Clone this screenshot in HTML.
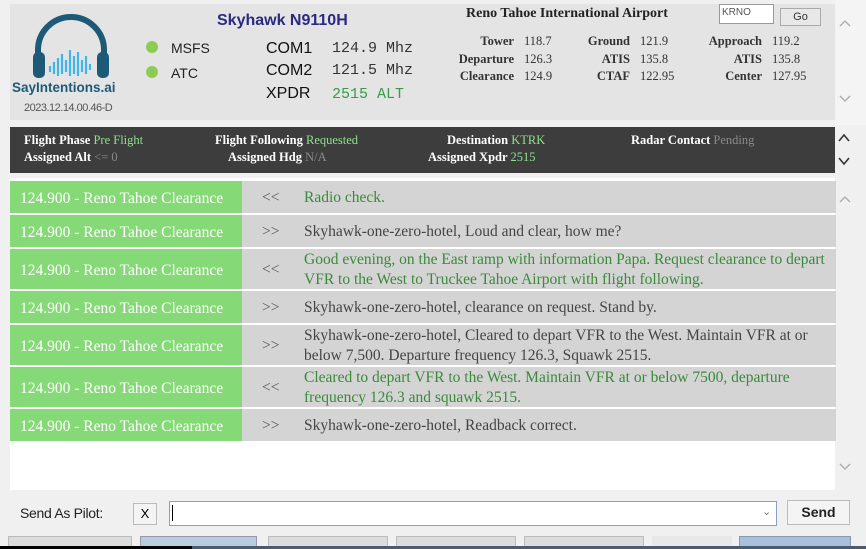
<!DOCTYPE html>
<html><head><meta charset="utf-8"><style>
*{margin:0;padding:0;box-sizing:border-box}
body{width:866px;height:549px;overflow:hidden;background:#f0f0f0;font-family:"Liberation Serif",serif;position:relative}
.abs{position:absolute}
.sans{font-family:"Liberation Sans",sans-serif}
.mono{font-family:"Liberation Mono",monospace}
.hdr{left:10px;top:4px;width:825px;height:116px;background:#e4e4e4}
.dark{left:10px;top:127px;width:825px;height:46px;background:#3d3d3d;color:#fff;font-size:12.5px;font-weight:bold}
.dark span{position:absolute;white-space:nowrap}
.g{color:#8fe08f;font-weight:normal}
.gr{color:#8a8a8a;font-weight:normal}
.chat{left:10px;top:178px;width:825px;height:312px;background:#fff}
.row{position:absolute;left:10px;width:826px;background:#d4d4d4;font-size:15.5px}
.row .f{position:absolute;left:0;top:0;bottom:0;width:232px;background:#86d977;color:#fff;display:flex;align-items:center;padding-left:10px;padding-top:3px}
.row .a{position:absolute;left:252px;top:0;bottom:0;display:flex;align-items:center;color:#555;padding-top:2px}
.row .t{position:absolute;left:294px;right:4px;top:0;bottom:0;display:flex;align-items:center;line-height:20px;padding-top:2px}
.atc{color:#3a8a3a}.plt{color:#444}
</style></head><body>
<div class="abs hdr"></div>
<div class="abs" style="left:835px;top:0;width:31px;height:125px;background:#f4f4f4"></div>
<svg class="abs" style="left:30px;top:14px" width="82" height="66" viewBox="0 0 82 66">
<path d="M8 44 V36 A33 33 0 0 1 74 36 V44" fill="none" stroke="#1d5a78" stroke-width="6"/>
<rect x="3" y="38" width="12" height="26" rx="5" fill="#1d5a78"/>
<rect x="67" y="38" width="12" height="26" rx="5" fill="#1d5a78"/>
<g stroke="#3fb6e3" stroke-width="2.2">
<line x1="20" y1="52" x2="20" y2="58"/><line x1="24" y1="48" x2="24" y2="60"/><line x1="28" y1="44" x2="28" y2="62"/><line x1="32" y1="40" x2="32" y2="60"/><line x1="36" y1="46" x2="36" y2="58"/><line x1="40" y1="36" x2="40" y2="62"/><line x1="44" y1="42" x2="44" y2="60"/><line x1="48" y1="38" x2="48" y2="62"/><line x1="52" y1="46" x2="52" y2="58"/><line x1="56" y1="42" x2="56" y2="60"/><line x1="60" y1="50" x2="60" y2="56"/></g></svg>
<div class="abs sans" style="left:12px;top:80px;font-size:13.5px;font-weight:bold;color:#1d5a78">SayIntentions.ai</div>
<div class="abs sans" style="left:24px;top:102px;font-size:11px;color:#555;letter-spacing:-0.5px">2023.12.14.00.46-D</div>
<div class="abs sans" style="left:217px;top:12px;font-size:16px;font-weight:bold;color:#2a2a80">Skyhawk N9110H</div>
<div class="abs" style="left:146px;top:41px;width:12px;height:12px;border-radius:50%;background:#8ccc55"></div>
<div class="abs" style="left:146px;top:66px;width:12px;height:12px;border-radius:50%;background:#8ccc55"></div>
<div class="abs sans" style="left:171px;top:40px;font-size:14px;color:#222">MSFS</div>
<div class="abs sans" style="left:171px;top:65px;font-size:14px;color:#222">ATC</div>
<div class="abs sans" style="left:266px;top:40px;font-size:16px;color:#111">COM1</div>
<div class="abs sans" style="left:266px;top:62px;font-size:16px;color:#111">COM2</div>
<div class="abs sans" style="left:266px;top:85px;font-size:16px;color:#111">XPDR</div>
<div class="abs mono" style="left:332px;top:40px;font-size:15px;color:#333">124.9 Mhz</div>
<div class="abs mono" style="left:332px;top:62px;font-size:15px;color:#333">121.5 Mhz</div>
<div class="abs mono" style="left:332px;top:86px;font-size:15px;color:#3a9a4a">2515 ALT</div>
<div class="abs" style="left:466px;top:6px;font-size:14px;font-weight:bold;color:#222">Reno Tahoe International Airport</div>
<div class="abs sans" style="left:719px;top:4px;width:55px;height:20px;background:#fff;border:1px solid #999;font-size:10px;color:#555;padding:2px 2px">KRNO</div>
<div class="abs sans" style="left:780px;top:8px;width:41px;height:18px;background:#e8e8e8;border:1px solid #aaa;font-size:11px;color:#333;text-align:center;line-height:16px">Go</div>
<div class="abs" style="left:433px;top:33px;font-size:12.5px;color:#333;line-height:17.5px">
<div class="abs" style="left:0;width:81px;text-align:right;font-weight:bold">Tower<br>Departure<br>Clearance</div>
<div class="abs" style="left:91px">118.7<br>126.3<br>124.9</div>
<div class="abs" style="left:100px;width:97px;text-align:right;font-weight:bold">Ground<br>ATIS<br>CTAF</div>
<div class="abs" style="left:207px">121.9<br>135.8<br>122.95</div>
<div class="abs" style="left:230px;width:99px;text-align:right;font-weight:bold">Approach<br>ATIS<br>Center</div>
<div class="abs" style="left:339px">119.2<br>135.8<br>127.95</div>
</div>
<svg class="abs" style="left:838px;top:18px" width="14" height="90" fill="none" stroke="#aaa" stroke-width="1.3"><path d="M2 8 L7 3 L12 8"/><path d="M2 78 L7 83 L12 78"/></svg>
<div class="abs dark">
<span style="left:14px;top:6px">Flight Phase <span class="g" style="position:static">Pre Flight</span></span>
<span style="left:14px;top:23px">Assigned Alt <span class="gr" style="position:static">&lt;= 0</span></span>
<span style="left:205px;top:6px">Flight Following <span class="g" style="position:static">Requested</span></span>
<span style="left:218px;top:23px">Assigned Hdg <span class="gr" style="position:static">N/A</span></span>
<span style="left:437px;top:6px">Destination <span class="g" style="position:static">KTRK</span></span>
<span style="left:418px;top:23px">Assigned Xpdr <span class="g" style="position:static">2515</span></span>
<span style="left:621px;top:6px">Radar Contact <span class="gr" style="position:static">Pending</span></span>
</div>
<svg class="abs" style="left:837px;top:132px" width="14" height="36" fill="none" stroke="#333" stroke-width="1.6"><path d="M2 9 L7 3 L12 9"/><path d="M2 26 L7 32 L12 26"/></svg>
<div class="abs chat"></div>
<div class="row" style="top:181px;height:32px"><div class="f">124.900 - Reno Tahoe Clearance</div><div class="a">&lt;&lt;</div><div class="t atc">Radio check.</div></div>
<div class="row" style="top:215px;height:32px"><div class="f">124.900 - Reno Tahoe Clearance</div><div class="a">&gt;&gt;</div><div class="t plt">Skyhawk-one-zero-hotel, Loud and clear, how me?</div></div>
<div class="row" style="top:249px;height:40px"><div class="f">124.900 - Reno Tahoe Clearance</div><div class="a">&lt;&lt;</div><div class="t atc">Good evening, on the East ramp with information Papa. Request clearance to depart VFR to the West to Truckee Tahoe Airport with flight following.</div></div>
<div class="row" style="top:291px;height:32px"><div class="f">124.900 - Reno Tahoe Clearance</div><div class="a">&gt;&gt;</div><div class="t plt">Skyhawk-one-zero-hotel, clearance on request. Stand by.</div></div>
<div class="row" style="top:325px;height:40px"><div class="f">124.900 - Reno Tahoe Clearance</div><div class="a">&gt;&gt;</div><div class="t plt">Skyhawk-one-zero-hotel, Cleared to depart VFR to the West. Maintain VFR at or below 7,500. Departure frequency 126.3, Squawk 2515.</div></div>
<div class="row" style="top:367px;height:40px"><div class="f">124.900 - Reno Tahoe Clearance</div><div class="a">&lt;&lt;</div><div class="t atc">Cleared to depart VFR to the West. Maintain VFR at or below 7500, departure frequency 126.3 and squawk 2515.</div></div>
<div class="row" style="top:409px;height:32px"><div class="f">124.900 - Reno Tahoe Clearance</div><div class="a">&gt;&gt;</div><div class="t plt">Skyhawk-one-zero-hotel, Readback correct.</div></div>
<svg class="abs" style="left:838px;top:194px" width="14" height="280" fill="none" stroke="#aaa" stroke-width="1.3"><path d="M2 8 L7 3 L12 8"/><path d="M2 270 L7 275 L12 270"/></svg>
<div class="abs sans" style="left:20px;top:505px;font-size:14px;color:#222;letter-spacing:-0.3px">Send As Pilot:</div>
<div class="abs sans" style="left:133px;top:503px;width:24px;height:22px;border:1px solid #bbb;background:#f4f4f4;font-size:13px;text-align:center;line-height:20px">X</div>
<div class="abs" style="left:169px;top:501px;width:608px;height:25px;background:#fff;border:1px solid #8aa0c0"></div>
<div class="abs" style="left:172px;top:505px;width:1px;height:16px;background:#000"></div>
<div class="abs sans" style="left:762px;top:505px;font-size:11px;color:#777">&#8964;</div>
<div class="abs sans" style="left:787px;top:500px;width:63px;height:25px;border:1px solid #bbb;background:#f4f4f4;font-size:14px;text-align:center;line-height:23px;font-weight:bold;color:#222">Send</div>
<div class="abs" style="left:8px;top:536px;width:124px;height:13px;background:#dcdcdc;border:1px solid #bbb"></div>
<div class="abs" style="left:140px;top:536px;width:117px;height:13px;background:#b8cce0;border:1px solid #99a"></div>
<div class="abs" style="left:268px;top:536px;width:120px;height:13px;background:#dcdcdc;border:1px solid #bbb"></div>
<div class="abs" style="left:396px;top:536px;width:120px;height:13px;background:#dcdcdc;border:1px solid #bbb"></div>
<div class="abs" style="left:524px;top:536px;width:120px;height:13px;background:#dcdcdc;border:1px solid #bbb"></div>
<div class="abs" style="left:652px;top:536px;width:80px;height:13px;background:#e8e8e8"></div>
<div class="abs" style="left:739px;top:536px;width:112px;height:13px;background:#a8c0dc;border:1px solid #89a"></div>
<div class="abs" style="left:0;top:546px;width:192px;height:3px;background:#000"></div>
<div class="abs" style="left:192px;top:546px;width:674px;height:3px;background:#4a5d70"></div>
</body></html>
